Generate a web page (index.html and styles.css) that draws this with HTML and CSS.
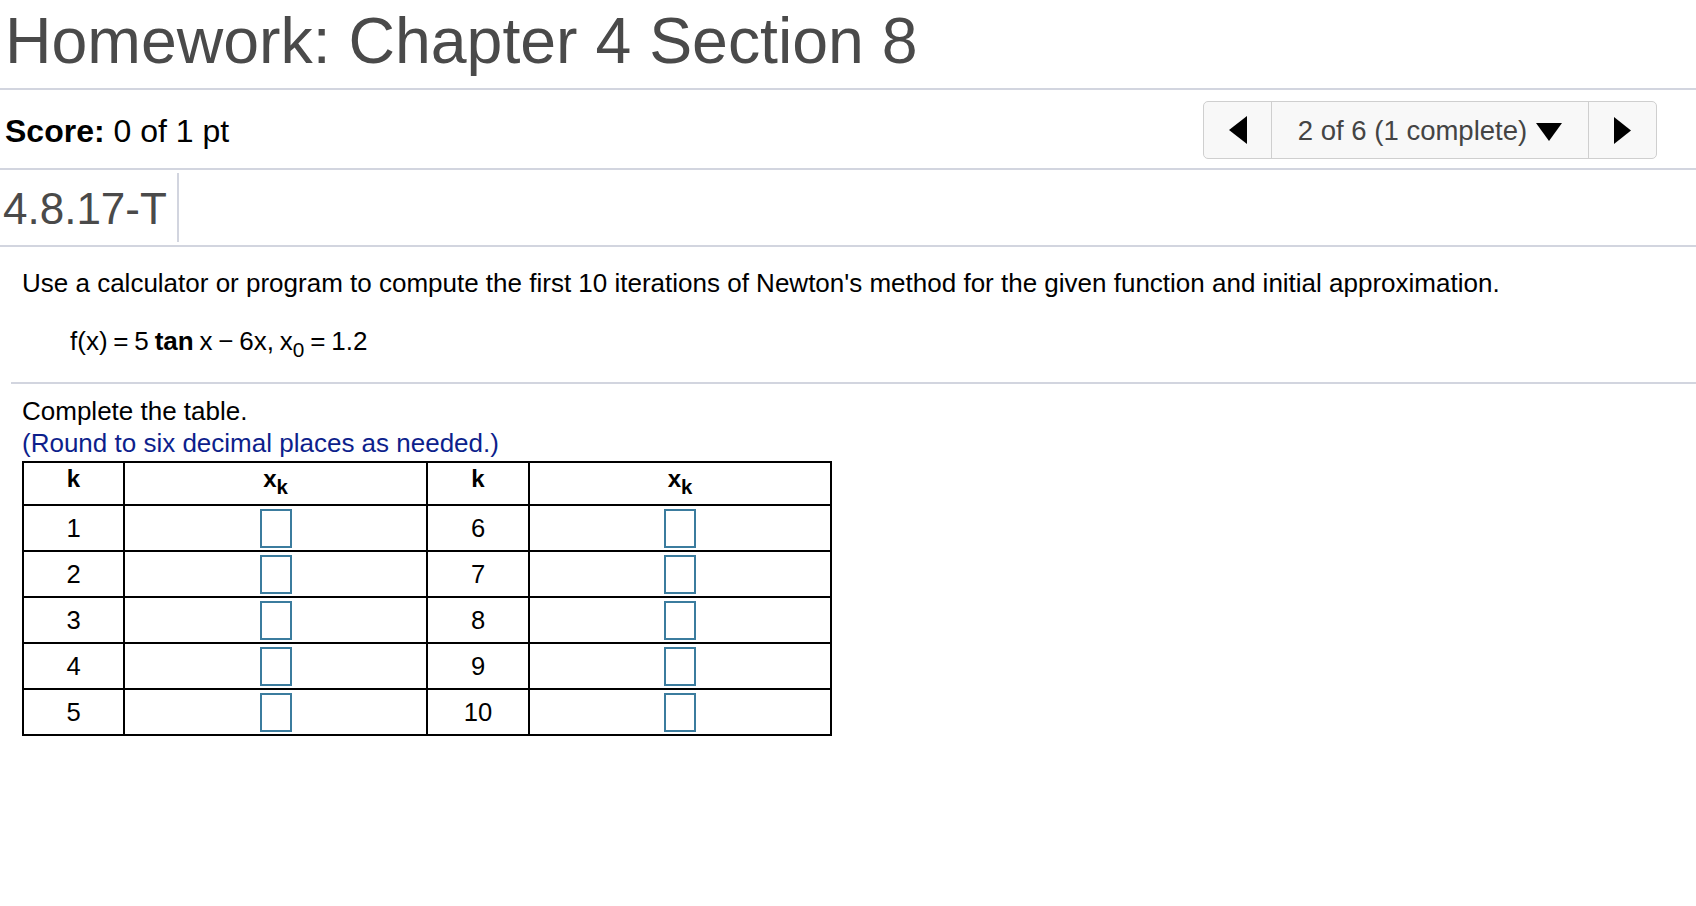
FILE: index.html
```html
<!DOCTYPE html>
<html lang="en">
<head>
<meta charset="utf-8">
<title>Homework: Chapter 4 Section 8</title>
<link rel="stylesheet" href="styles.css">
</head>
<body>
<div class="page">
  <h1 class="title">Homework: Chapter 4 Section 8</h1>
  <div class="score-row">
    <div class="score"><b>Score:</b> 0 of 1 pt</div>
    <div class="nav">
      <div class="nav-btn">
        <svg width="18" height="28" viewBox="0 0 18 28"><polygon points="18,0 18,28 0,14" fill="#000"/></svg>
      </div>
      <div class="nav-mid">
        <span>2 of 6 (1 complete)</span>
        <svg class="down" width="26" height="18" viewBox="0 0 26 18"><polygon points="0,0 26,0 13,18" fill="#000"/></svg>
      </div>
      <div class="nav-btn">
        <svg width="17" height="27" viewBox="0 0 17 27"><polygon points="0,0 17,13.5 0,27" fill="#000"/></svg>
      </div>
    </div>
  </div>
  <div class="id-row">
    <div class="qid">4.8.17-T</div>
  </div>
  <div class="question">
    <p class="prompt">Use a calculator or program to compute the first 10 iterations of Newton's method for the given function and initial approximation.</p>
    <p class="formula">f(x) = 5 <b>tan</b> x − 6x, x<sub>0</sub> = 1.2</p>
  </div>
  <div class="answer">
    <p class="line">Complete the table.</p>
    <p class="line hint">(Round to six decimal places as needed.)</p>
    <table class="grid">
      <colgroup>
        <col class="c-k"><col class="c-x"><col class="c-k2"><col class="c-x2">
      </colgroup>
      <thead>
        <tr><th>k</th><th>x<sub>k</sub></th><th>k</th><th>x<sub>k</sub></th></tr>
      </thead>
      <tbody>
        <tr><td>1</td><td><span class="box"></span></td><td>6</td><td><span class="box"></span></td></tr>
        <tr><td>2</td><td><span class="box"></span></td><td>7</td><td><span class="box"></span></td></tr>
        <tr><td>3</td><td><span class="box"></span></td><td>8</td><td><span class="box"></span></td></tr>
        <tr><td>4</td><td><span class="box"></span></td><td>9</td><td><span class="box"></span></td></tr>
        <tr><td>5</td><td><span class="box"></span></td><td>10</td><td><span class="box"></span></td></tr>
      </tbody>
    </table>
  </div>
</div>
</body>
</html>
```

FILE: styles.css
```css
html, body {
  margin: 0;
  padding: 0;
  background: #fff;
}
body {
  font-family: "Liberation Sans", Arial, Helvetica, sans-serif;
  color: #000;
}
.title {
  margin: 0;
  padding: 9px 0 15px 5px;
  font-size: 64.4px;
  line-height: 64px;
  font-weight: normal;
  color: #4a4a4a;
  border-bottom: 2px solid #d2d5df;
}
.score-row {
  display: flex;
  justify-content: space-between;
  align-items: center;
  padding: 11px 39px 9px 5px;
  border-bottom: 2px solid #d2d5df;
}
.score {
  font-size: 32px;
  line-height: 36px;
  padding-top: 2px;
}
.score b { font-weight: bold; }
.nav {
  display: flex;
  height: 56px;
  border: 1px solid #cfcfcf;
  border-radius: 5px;
  background: #f8f8f8;
}
.nav-btn {
  width: 67px;
  display: flex;
  align-items: center;
  justify-content: center;
}
.nav-btn:first-child { border-right: 1px solid #cfcfcf; }
.nav-btn:last-child { border-left: 1px solid #cfcfcf; }
.nav-mid {
  width: 316px;
  display: flex;
  align-items: center;
  justify-content: center;
  gap: 9px;
  font-size: 27.5px;
  color: #444;
  padding-top: 1px;
}
.nav-mid .down { margin-top: 2px; }
.id-row {
  height: 77px;
  display: flex;
  align-items: stretch;
  padding: 3px 0 3px 3px;
  box-sizing: border-box;
  border-bottom: 2px solid #d2d5df;
}
.qid {
  font-size: 44px;
  color: #4a4a4a;
  padding-right: 10px;
  border-right: 2px solid #d2d5df;
  display: flex;
  align-items: center;
  padding-top: 2px;
}
.question {
  margin-left: 11px;
  padding: 22px 0 26px 11px;
  border-bottom: 2px solid #d2d5df;
}
.question p {
  margin: 0;
  font-size: 26px;
  line-height: 29px;
}
.question .formula {
  margin-top: 29px;
  padding-left: 48px;
  word-spacing: -1.4px;
}
.formula sub {
  font-size: 0.8em;
  line-height: 0;
  vertical-align: -0.35em;
}
.answer {
  padding: 13px 0 0 22px;
}
.answer .line {
  margin: 0;
  font-size: 26px;
  line-height: 29px;
}
.answer .hint {
  margin-top: 3px;
  color: #0d1f8c;
}
.grid {
  margin-top: 3px;
  border-collapse: collapse;
  border: 2px solid #000;
  font-size: 25.6px;
}
.c-k { width: 101px; }
.c-x { width: 303px; }
.c-k2 { width: 102px; }
.c-x2 { width: 302px; }
.grid th, .grid td {
  border: 2px solid #000;
  text-align: center;
  padding: 0;
}
.grid th {
  height: 40px;
  vertical-align: top;
  font-weight: bold;
  font-size: 24px;
  line-height: 29px;
  padding-top: 1px;
}
.grid th sub {
  font-size: 0.85em;
  line-height: 0;
  vertical-align: -0.35em;
}
.grid td {
  height: 44px;
  vertical-align: middle;
  line-height: 29px;
}
.box {
  display: inline-block;
  width: 28px;
  height: 35px;
  border: 2px solid #3b7c9e;
  vertical-align: middle;
}
```
